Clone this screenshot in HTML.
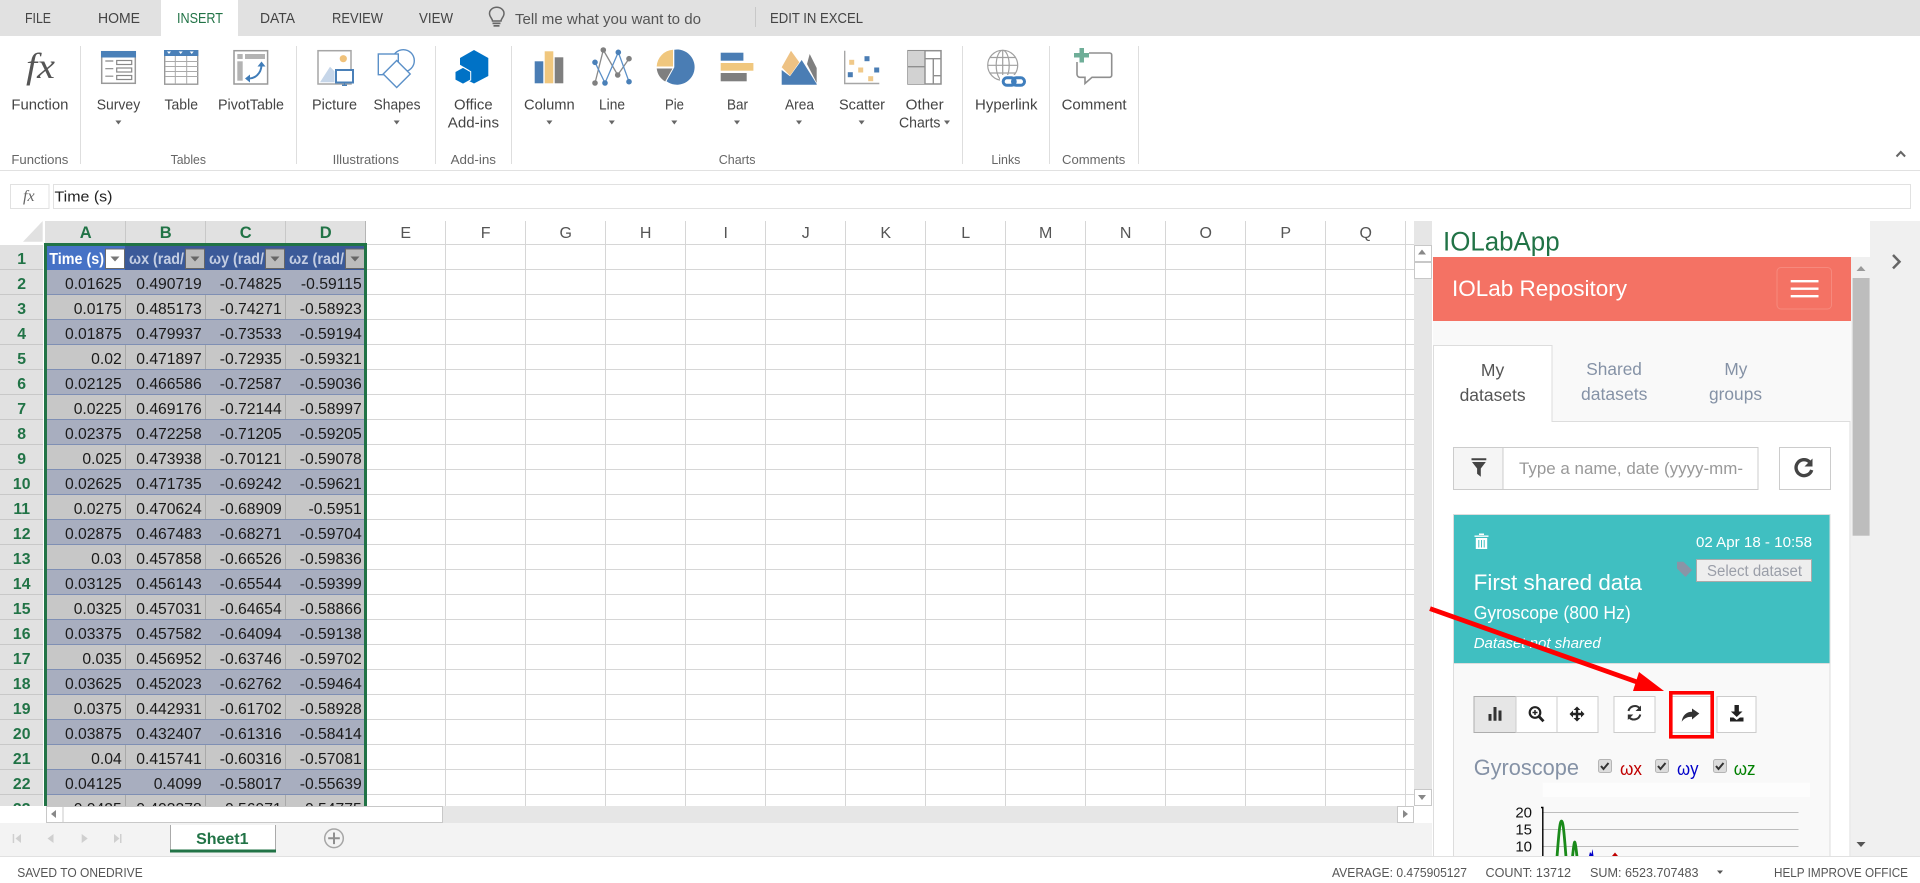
<!DOCTYPE html>
<html lang="en"><head><meta charset="utf-8"><title>Excel Online - IOLabApp</title>
<style>
html,body{margin:0;padding:0;width:1920px;height:883px;overflow:hidden;background:#fff}
svg{display:block;font-family:"Liberation Sans",Arial,sans-serif}
.tab{font-size:15px;fill:#444}
.lb{font-size:14.5px;fill:#444}
.gl{font-size:13px;fill:#666}
.c{font-size:15.7px;fill:#1a1a1a;text-anchor:end}
.rh{font-size:15.8px;font-weight:bold;fill:#217346;text-anchor:middle}
.ch{font-size:16px;fill:#555;text-anchor:middle}
.chs{font-size:16.5px;font-weight:bold;fill:#217346;text-anchor:middle}
.st{font-size:12.5px;fill:#555}
.ar{fill:#666}
</style></head><body>
<svg width="1920" height="883" viewBox="0 0 1920 883" xmlns="http://www.w3.org/2000/svg">
<defs>
<pattern id="gh" x="0" y="245" width="10" height="25" patternUnits="userSpaceOnUse"><rect y="24" width="10" height="1" fill="#d6d6d6"/></pattern>
<pattern id="gv" x="366" y="0" width="80" height="10" patternUnits="userSpaceOnUse"><rect x="79" width="1" height="10" fill="#d6d6d6"/></pattern>
<pattern id="rows" x="47" y="270" width="317" height="50" patternUnits="userSpaceOnUse">
<rect width="317" height="25" fill="#a8aebf"/><rect y="25" width="317" height="25" fill="#c7c7c7"/>
<rect x="78" y="25" width="1" height="25" fill="#a9a9a9"/><rect x="158" y="25" width="1" height="25" fill="#a9a9a9"/><rect x="238" y="25" width="1" height="25" fill="#a9a9a9"/>
<rect y="24" width="317" height="1" fill="#7f8fb4"/><rect y="49" width="317" height="1" fill="#7f8fb4"/>
</pattern>
<pattern id="rhp" x="0" y="245" width="43" height="25" patternUnits="userSpaceOnUse"><rect width="43" height="25" fill="#e1e1e1"/><rect y="24" width="43" height="1" fill="#c8c8c8"/></pattern>
<clipPath id="gridclip"><rect x="0" y="221" width="1414" height="585"/></clipPath>
<clipPath id="paneclip"><rect x="1433" y="257" width="418" height="599"/></clipPath>
</defs>

<!-- Tab bar -->
<rect width="1920" height="36" fill="#e1e1e1"/>
<rect x="161" width="77" height="36" fill="#fff"/>
<text class="tab" x="25" y="23" textLength="26" lengthAdjust="spacingAndGlyphs">FILE</text>
<text class="tab" x="98" y="23" textLength="42" lengthAdjust="spacingAndGlyphs">HOME</text>
<text class="tab" x="177" y="23" textLength="46" lengthAdjust="spacingAndGlyphs" style="fill:#217346">INSERT</text>
<text class="tab" x="260" y="23" textLength="35" lengthAdjust="spacingAndGlyphs">DATA</text>
<text class="tab" x="332" y="23" textLength="51" lengthAdjust="spacingAndGlyphs">REVIEW</text>
<text class="tab" x="419" y="23" textLength="34" lengthAdjust="spacingAndGlyphs">VIEW</text>
<path d="M492.5 21c0-2.500-3-4-3-7.500a7 6 0 0 1 14.500 0c0 3.500-3 5-3 7.500z" fill="none" stroke="#666" stroke-width="1.500"/><rect x="492.500" y="22.500" width="8" height="1.700" fill="#666"/><rect x="493.500" y="25" width="6" height="1.700" fill="#666"/>
<text class="tab" x="515" y="24" textLength="186" lengthAdjust="spacingAndGlyphs" style="fill:#555">Tell me what you want to do</text>
<rect x="755" y="7" width="1" height="20" fill="#c8c8c8"/>
<text class="tab" x="770" y="23" textLength="93" lengthAdjust="spacingAndGlyphs">EDIT IN EXCEL</text>

<!-- Ribbon separators -->
<g fill="#dedede"><rect x="80" y="46" width="1" height="118"/><rect x="296" y="46" width="1" height="118"/><rect x="435" y="46" width="1" height="118"/><rect x="511" y="46" width="1" height="118"/><rect x="962" y="46" width="1" height="118"/><rect x="1049" y="46" width="1" height="118"/><rect x="1138" y="46" width="1" height="118"/></g>
<rect y="170" width="1920" height="1" fill="#e1e1e1"/>
<path d="M1896.500 156.500l4.300-4.500 4.300 4.500" fill="none" stroke="#666" stroke-width="2"/>

<!-- Ribbon labels -->
<g>
<text class="lb" x="11.400" y="109.500" textLength="57" lengthAdjust="spacingAndGlyphs">Function</text>
<text class="lb" x="96.700" y="109.500" textLength="43.500" lengthAdjust="spacingAndGlyphs">Survey</text>
<text class="lb" x="164.500" y="109.500" textLength="33.500" lengthAdjust="spacingAndGlyphs">Table</text>
<text class="lb" x="218" y="109.500" textLength="66" lengthAdjust="spacingAndGlyphs">PivotTable</text>
<text class="lb" x="312" y="109.500" textLength="45" lengthAdjust="spacingAndGlyphs">Picture</text>
<text class="lb" x="373.500" y="109.500" textLength="47" lengthAdjust="spacingAndGlyphs">Shapes</text>
<text class="lb" x="454" y="109.500" textLength="38.600" lengthAdjust="spacingAndGlyphs">Office</text>
<text class="lb" x="447.800" y="127.500" textLength="51.200" lengthAdjust="spacingAndGlyphs">Add-ins</text>
<text class="lb" x="524" y="109.500" textLength="50.700" lengthAdjust="spacingAndGlyphs">Column</text>
<text class="lb" x="599" y="109.500" textLength="26" lengthAdjust="spacingAndGlyphs">Line</text>
<text class="lb" x="665" y="109.500" textLength="19" lengthAdjust="spacingAndGlyphs">Pie</text>
<text class="lb" x="727" y="109.500" textLength="21" lengthAdjust="spacingAndGlyphs">Bar</text>
<text class="lb" x="785" y="109.500" textLength="29" lengthAdjust="spacingAndGlyphs">Area</text>
<text class="lb" x="839" y="109.500" textLength="46" lengthAdjust="spacingAndGlyphs">Scatter</text>
<text class="lb" x="905.700" y="109.500" textLength="38" lengthAdjust="spacingAndGlyphs">Other</text>
<text class="lb" x="899" y="127.500" textLength="41.400" lengthAdjust="spacingAndGlyphs">Charts</text>
<text class="lb" x="975" y="109.500" textLength="62.500" lengthAdjust="spacingAndGlyphs">Hyperlink</text>
<text class="lb" x="1061.600" y="109.500" textLength="65" lengthAdjust="spacingAndGlyphs">Comment</text>
<text class="gl" x="11.400" y="164" textLength="57" lengthAdjust="spacingAndGlyphs">Functions</text>
<text class="gl" x="170.600" y="164" textLength="35.400" lengthAdjust="spacingAndGlyphs">Tables</text>
<text class="gl" x="332.600" y="164" textLength="66.400" lengthAdjust="spacingAndGlyphs">Illustrations</text>
<text class="gl" x="450.600" y="164" textLength="45.400" lengthAdjust="spacingAndGlyphs">Add-ins</text>
<text class="gl" x="718.800" y="164" textLength="36.700" lengthAdjust="spacingAndGlyphs">Charts</text>
<text class="gl" x="991.400" y="164" textLength="29" lengthAdjust="spacingAndGlyphs">Links</text>
<text class="gl" x="1062" y="164" textLength="63.300" lengthAdjust="spacingAndGlyphs">Comments</text>
</g>
<g class="ar">
<path d="M115.400 120.500h6l-3 4z"/><path d="M393.700 120.500h6l-3 4z"/><path d="M546.400 120.500h6l-3 4z"/><path d="M608.800 120.500h6l-3 4z"/><path d="M671.300 120.500h6l-3 4z"/><path d="M734 120.500h6l-3 4z"/><path d="M796 120.500h6l-3 4z"/><path d="M858.600 120.500h6l-3 4z"/><path d="M944 120.500h6l-3 4z"/>
</g>

<!-- fx -->
<text x="26" y="78" font-family="Liberation Serif,serif" font-style="italic" font-size="36" fill="#555" textLength="29" lengthAdjust="spacingAndGlyphs">fx</text>

<!-- Survey -->
<rect x="101.700" y="51.700" width="33.600" height="31.600" fill="#fff" stroke="#999" stroke-width="1.500"/><rect x="101" y="51" width="35" height="6.500" fill="#4a80b8"/>
<g fill="none" stroke="#888" stroke-width="1.200"><path d="M105.300 61h8M105.300 68.700h8M105.300 76.200h8"/><rect x="116.700" y="60.500" width="15" height="4"/><rect x="116.700" y="68" width="15" height="4"/><rect x="116.700" y="75.500" width="15" height="4"/></g>
<!-- Table -->
<rect x="164.700" y="50.700" width="33" height="33.500" fill="#fff" stroke="#999" stroke-width="1.400"/><rect x="164" y="50" width="34.300" height="6" fill="#4a80b8"/>
<path d="M167 51.500h4l-2 2.500zM178.700 51.500h4l-2 2.500zM189.700 51.500h4l-2 2.500z" fill="#fff"/>
<path d="M175.300 56v28M186.700 56v28M165 61.500h33M165 66.500h33M165 71.500h33M165 76.500h33" stroke="#aaa" stroke-width="1" fill="none"/>
<!-- Pivot -->
<rect x="234" y="50.700" width="33.600" height="33.300" fill="#fff" stroke="#999" stroke-width="1.500"/>
<g fill="#b3b3b3"><rect x="237.300" y="54" width="5.400" height="5"/><rect x="245" y="54" width="20" height="5"/><rect x="237.300" y="61.300" width="5.400" height="19.400"/></g>
<path d="M248 78.500c7 .5 13-5 13.500-13" fill="none" stroke="#3f7cb8" stroke-width="2"/><path d="M257.500 66.500l4-5 4 5zM250 74.500l-5 4 5 4z" fill="#3f7cb8"/>
<!-- Picture -->
<rect x="318" y="50.700" width="33" height="33.300" fill="#fff" stroke="#a6a6a6" stroke-width="1.500"/>
<path d="M320 82.300L330 66.700l4.500 4.500 0 11z" fill="#c6d6e9"/>
<circle cx="343.300" cy="58.700" r="3.600" fill="#f0c27b"/>
<rect x="336" y="70" width="17" height="12.500" fill="#fff" stroke="#4a80b8" stroke-width="2"/><rect x="342" y="84.500" width="5" height="1.500" fill="#4a80b8"/><rect x="344" y="83" width="1" height="2" fill="#4a80b8"/>
<!-- Shapes -->
<g fill="none" stroke="#5b90c8" stroke-width="1.400"><circle cx="403.300" cy="60.700" r="11"/><rect x="378.300" y="54" width="20" height="20.700" fill="#fff"/><path d="M396.700 60.500l13.500 13.500-13.500 13.500-13.500-13.500z" fill="#fff"/></g>
<!-- Add-ins -->
<path d="M474 50l14.300 8v18l-14.300 7.500-5-2.500v-11l-9-5.200V58z" fill="#0072c6"/>
<path d="M463 67.300l7.700 4.400V80L463 84.200 455 80v-8.300z" fill="#0072c6" stroke="#fff" stroke-width="1"/>
<!-- Column -->
<rect x="534.700" y="61.300" width="8.600" height="22" fill="#4a7db4"/><rect x="544.700" y="51.300" width="8.600" height="32" fill="#f0c77e"/><rect x="554.700" y="57.300" width="8.600" height="26" fill="#7f7f7f"/>
<!-- Line -->
<path d="M595 83L603.300 50 617.700 75 629 58.700" fill="none" stroke="#8a8a8a" stroke-width="1.300"/><path d="M595 62.300L605 83 618.300 52.300 629 81.700" fill="none" stroke="#5b90c8" stroke-width="1.300"/>
<g fill="#808080"><circle cx="595" cy="83" r="2.800"/><circle cx="603.300" cy="50" r="2.800"/><circle cx="617.700" cy="75" r="2.800"/><circle cx="629" cy="58.700" r="2.800"/></g>
<g fill="#4a80b8"><circle cx="595" cy="62.300" r="2.800"/><circle cx="605" cy="83" r="2.800"/><circle cx="618.300" cy="52.300" r="2.800"/><circle cx="629" cy="81.700" r="2.800"/></g>
<!-- Pie -->
<path d="M674.300 67.300V49.700a17.600 17.600 0 1 1 -7.800 31.500z" fill="#4a7db4"/><path d="M673 66.500V49.700A17.600 17.600 0 0 0 656.700 66.500z" fill="#f0c77e"/><path d="M672.500 68.500H656.700a17.600 17.600 0 0 0 8.500 13z" fill="#7f7f7f"/>
<!-- Bar -->
<rect x="720.700" y="52.700" width="22.700" height="8" fill="#4a7db4"/><rect x="720.700" y="63" width="32.700" height="7.700" fill="#f0c77e"/><rect x="720.700" y="73" width="26" height="8.300" fill="#7f7f7f"/>
<!-- Area -->
<path d="M807 64l2.700-10 7 14v15z" fill="#7f7f7f"/><path d="M781.700 67.300L791 50.700l8.300 11.600-9.300 13.400z" fill="#eec284"/><path d="M781.700 70l8.300 6.300L801.700 60l15 24v.7h-35z" fill="#4a7db4"/>
<!-- Scatter -->
<path d="M844.700 50.700V83.500h34.600" fill="none" stroke="#a6a6a6" stroke-width="1.400"/>
<g fill="#f0c98a"><rect x="849.200" y="59.800" width="5" height="5"/><rect x="858.200" y="67.500" width="5" height="5"/><rect x="868.200" y="76.200" width="5" height="5"/></g>
<g fill="#4a7db4"><rect x="864.500" y="56.200" width="5" height="5"/><rect x="847.800" y="72.200" width="5" height="5"/><rect x="874.200" y="67.500" width="5" height="5"/></g>
<!-- Other -->
<rect x="908" y="50.700" width="33" height="33.300" fill="#fff" stroke="#8f8f8f" stroke-width="1.500"/><rect x="908" y="51" width="17" height="33" fill="#d2d2d2"/>
<path d="M925 50.700V84M908 66.700h17M925 58.700h16M933.300 58.700V84M933.300 75.700H941" fill="none" stroke="#8f8f8f" stroke-width="1.400"/>
<!-- Hyperlink -->
<g fill="none" stroke="#a0a0a0" stroke-width="1.200"><circle cx="1002.700" cy="65.300" r="15"/><ellipse cx="1002.700" cy="65.300" rx="6.500" ry="15"/><path d="M1002.700 50.300v30M987.700 65.300h30M990 57.500h25.500M990 73h25.500"/></g>
<rect x="1000" y="75" width="28" height="13" fill="#fff"/>
<g fill="none" stroke="#3f7ebd" stroke-width="3"><rect x="1003.200" y="77.800" width="12" height="7.500" rx="3.700"/><rect x="1012.500" y="77.800" width="12" height="7.500" rx="3.700"/></g>
<!-- Comment -->
<path d="M1089 53H1109.700a2 2 0 0 1 2 2V75.300a2 2 0 0 1-2 2H1092L1085 83.500V77.300H1080a3 3 0 0 1-3-3V62" fill="none" stroke="#8f8f8f" stroke-width="1.600"/>
<path d="M1079.500 48h4.500v5h5v4.500h-5v5h-4.500v-5h-5.500V53h5.500z" fill="#6fae98"/>

<!-- Formula bar -->
<rect x="10.500" y="184.500" width="38.500" height="24" fill="#fff" stroke="#e1e1e1"/>
<text x="23" y="201" font-family="Liberation Serif,serif" font-style="italic" font-size="16" fill="#666">fx</text>
<rect x="53.500" y="184.500" width="1857" height="24" fill="#fff" stroke="#e1e1e1"/>
<text x="54.500" y="201.500" font-size="15" fill="#222" textLength="58" lengthAdjust="spacingAndGlyphs">Time (s)</text>

<!-- Grid -->
<path d="M42.700 221v20.700H23z" fill="#e1e1e1"/>
<rect x="45" y="221" width="320" height="22" fill="#e1e1e1"/>
<rect x="125" y="221" width="1" height="22" fill="#c8c8c8"/><rect x="205" y="221" width="1" height="22" fill="#c8c8c8"/><rect x="285" y="221" width="1" height="22" fill="#c8c8c8"/><rect x="365" y="221" width="1" height="24" fill="#b5b5b5"/>
<rect x="366" y="244" width="1048" height="1" fill="#d6d6d6"/>
<rect x="366" y="245" width="1048" height="561" fill="url(#gh)"/>
<rect x="366" y="221" width="1040" height="585" fill="url(#gv)"/>
<text class="chs" x="85.700" y="238">A</text><text class="chs" x="165.700" y="238">B</text><text class="chs" x="245.700" y="238">C</text><text class="chs" x="325.700" y="238">D</text>
<g><text class="ch" x="405.700" y="238">E</text><text class="ch" x="485.700" y="238">F</text><text class="ch" x="565.700" y="238">G</text><text class="ch" x="645.700" y="238">H</text><text class="ch" x="725.700" y="238">I</text><text class="ch" x="805.700" y="238">J</text><text class="ch" x="885.700" y="238">K</text><text class="ch" x="965.700" y="238">L</text><text class="ch" x="1045.700" y="238">M</text><text class="ch" x="1125.700" y="238">N</text><text class="ch" x="1205.700" y="238">O</text><text class="ch" x="1285.700" y="238">P</text><text class="ch" x="1365.700" y="238">Q</text></g>

<g clip-path="url(#gridclip)">
<rect x="0" y="245" width="43" height="561" fill="url(#rhp)"/>
<rect x="47" y="270" width="317" height="536" fill="url(#rows)"/>
<rect x="47" y="246" width="317" height="24" fill="#3b5a99"/>
<rect x="47" y="246" width="78" height="24" fill="#4672c6"/>
<text x="49.300" y="264" font-size="15.500" font-weight="bold" fill="#fff" textLength="54.700" lengthAdjust="spacingAndGlyphs">Time (s)</text>
<g font-size="15.500" font-weight="bold" fill="#c3cde2">
<text x="129" y="264" textLength="55" lengthAdjust="spacingAndGlyphs">ωx (rad/</text>
<text x="209" y="264" textLength="55" lengthAdjust="spacingAndGlyphs">ωy (rad/</text>
<text x="289" y="264" textLength="55" lengthAdjust="spacingAndGlyphs">ωz (rad/</text>
</g>
<rect x="105.500" y="249" width="19" height="19.500" fill="#fff" stroke="#6a6a6a"/><path d="M110.500 256.500h9l-4.500 5z" fill="#777"/>
<rect x="185.500" y="249" width="19" height="19.500" fill="#bcbcbc" stroke="#666"/><path d="M190.500 256.500h9l-4.500 5z" fill="#666"/>
<rect x="265.500" y="249" width="19" height="19.500" fill="#bcbcbc" stroke="#666"/><path d="M270.500 256.500h9l-4.500 5z" fill="#666"/>
<rect x="345.500" y="249" width="19" height="19.500" fill="#bcbcbc" stroke="#666"/><path d="M350.500 256.500h9l-4.500 5z" fill="#666"/>

<text class="rh" x="21.700" y="264">1</text><text class="rh" x="21.700" y="289">2</text><text class="rh" x="21.700" y="314">3</text><text class="rh" x="21.700" y="339">4</text><text class="rh" x="21.700" y="364">5</text><text class="rh" x="21.700" y="389">6</text><text class="rh" x="21.700" y="414">7</text><text class="rh" x="21.700" y="439">8</text><text class="rh" x="21.700" y="464">9</text><text class="rh" x="21.700" y="489">10</text><text class="rh" x="21.700" y="514">11</text><text class="rh" x="21.700" y="539">12</text><text class="rh" x="21.700" y="564">13</text><text class="rh" x="21.700" y="589">14</text><text class="rh" x="21.700" y="614">15</text><text class="rh" x="21.700" y="639">16</text><text class="rh" x="21.700" y="664">17</text><text class="rh" x="21.700" y="689">18</text><text class="rh" x="21.700" y="714">19</text><text class="rh" x="21.700" y="739">20</text><text class="rh" x="21.700" y="764">21</text><text class="rh" x="21.700" y="789">22</text><text class="rh" x="21.700" y="814">23</text>

<text class="c" x="121.700" y="289">0.01625</text><text class="c" x="201.700" y="289">0.490719</text><text class="c" x="281.700" y="289">-0.74825</text><text class="c" x="361.700" y="289">-0.59115</text>
<text class="c" x="121.700" y="314">0.0175</text><text class="c" x="201.700" y="314">0.485173</text><text class="c" x="281.700" y="314">-0.74271</text><text class="c" x="361.700" y="314">-0.58923</text>
<text class="c" x="121.700" y="339">0.01875</text><text class="c" x="201.700" y="339">0.479937</text><text class="c" x="281.700" y="339">-0.73533</text><text class="c" x="361.700" y="339">-0.59194</text>
<text class="c" x="121.700" y="364">0.02</text><text class="c" x="201.700" y="364">0.471897</text><text class="c" x="281.700" y="364">-0.72935</text><text class="c" x="361.700" y="364">-0.59321</text>
<text class="c" x="121.700" y="389">0.02125</text><text class="c" x="201.700" y="389">0.466586</text><text class="c" x="281.700" y="389">-0.72587</text><text class="c" x="361.700" y="389">-0.59036</text>
<text class="c" x="121.700" y="414">0.0225</text><text class="c" x="201.700" y="414">0.469176</text><text class="c" x="281.700" y="414">-0.72144</text><text class="c" x="361.700" y="414">-0.58997</text>
<text class="c" x="121.700" y="439">0.02375</text><text class="c" x="201.700" y="439">0.472258</text><text class="c" x="281.700" y="439">-0.71205</text><text class="c" x="361.700" y="439">-0.59205</text>
<text class="c" x="121.700" y="464">0.025</text><text class="c" x="201.700" y="464">0.473938</text><text class="c" x="281.700" y="464">-0.70121</text><text class="c" x="361.700" y="464">-0.59078</text>
<text class="c" x="121.700" y="489">0.02625</text><text class="c" x="201.700" y="489">0.471735</text><text class="c" x="281.700" y="489">-0.69242</text><text class="c" x="361.700" y="489">-0.59621</text>
<text class="c" x="121.700" y="514">0.0275</text><text class="c" x="201.700" y="514">0.470624</text><text class="c" x="281.700" y="514">-0.68909</text><text class="c" x="361.700" y="514">-0.5951</text>
<text class="c" x="121.700" y="539">0.02875</text><text class="c" x="201.700" y="539">0.467483</text><text class="c" x="281.700" y="539">-0.68271</text><text class="c" x="361.700" y="539">-0.59704</text>
<text class="c" x="121.700" y="564">0.03</text><text class="c" x="201.700" y="564">0.457858</text><text class="c" x="281.700" y="564">-0.66526</text><text class="c" x="361.700" y="564">-0.59836</text>
<text class="c" x="121.700" y="589">0.03125</text><text class="c" x="201.700" y="589">0.456143</text><text class="c" x="281.700" y="589">-0.65544</text><text class="c" x="361.700" y="589">-0.59399</text>
<text class="c" x="121.700" y="614">0.0325</text><text class="c" x="201.700" y="614">0.457031</text><text class="c" x="281.700" y="614">-0.64654</text><text class="c" x="361.700" y="614">-0.58866</text>
<text class="c" x="121.700" y="639">0.03375</text><text class="c" x="201.700" y="639">0.457582</text><text class="c" x="281.700" y="639">-0.64094</text><text class="c" x="361.700" y="639">-0.59138</text>
<text class="c" x="121.700" y="664">0.035</text><text class="c" x="201.700" y="664">0.456952</text><text class="c" x="281.700" y="664">-0.63746</text><text class="c" x="361.700" y="664">-0.59702</text>
<text class="c" x="121.700" y="689">0.03625</text><text class="c" x="201.700" y="689">0.452023</text><text class="c" x="281.700" y="689">-0.62762</text><text class="c" x="361.700" y="689">-0.59464</text>
<text class="c" x="121.700" y="714">0.0375</text><text class="c" x="201.700" y="714">0.442931</text><text class="c" x="281.700" y="714">-0.61702</text><text class="c" x="361.700" y="714">-0.58928</text>
<text class="c" x="121.700" y="739">0.03875</text><text class="c" x="201.700" y="739">0.432407</text><text class="c" x="281.700" y="739">-0.61316</text><text class="c" x="361.700" y="739">-0.58414</text>
<text class="c" x="121.700" y="764">0.04</text><text class="c" x="201.700" y="764">0.415741</text><text class="c" x="281.700" y="764">-0.60316</text><text class="c" x="361.700" y="764">-0.57081</text>
<text class="c" x="121.700" y="789">0.04125</text><text class="c" x="201.700" y="789">0.4099</text><text class="c" x="281.700" y="789">-0.58017</text><text class="c" x="361.700" y="789">-0.55639</text>
<text class="c" x="121.700" y="814">0.0425</text><text class="c" x="201.700" y="814">0.403378</text><text class="c" x="281.700" y="814">-0.56971</text><text class="c" x="361.700" y="814">-0.54775</text>

<!-- selection -->
<rect x="44" y="243" width="322.700" height="3" fill="#217346"/><rect x="44" y="243" width="3" height="563" fill="#217346"/><rect x="364" y="243" width="3" height="563" fill="#217346"/>
</g>

<!-- V scrollbar -->
<rect x="1414" y="221" width="18" height="585" fill="#e6e6e6"/>
<rect x="1414.500" y="245.500" width="17" height="16" fill="#fff" stroke="#c8c8c8"/><path d="M1418 254.500h8l-4-5z" fill="#888"/>
<rect x="1414.500" y="262.500" width="17" height="16" fill="#fff" stroke="#c8c8c8"/>
<rect x="1414.500" y="789.500" width="17" height="16" fill="#fff" stroke="#c8c8c8"/><path d="M1418 795h8l-4 5z" fill="#888"/>
<!-- H scrollbar -->
<rect x="0" y="806" width="1432" height="17" fill="#fff"/>
<rect x="46.500" y="806.500" width="396" height="16" fill="#fff" stroke="#c8c8c8"/>
<rect x="46.500" y="806.500" width="16.500" height="16" fill="#fff" stroke="#c8c8c8"/><path d="M56 810v8l-5-4z" fill="#888"/>
<rect x="443" y="806" width="954" height="17" fill="#e6e6e6"/>
<rect x="1397.500" y="806.500" width="16" height="16" fill="#fff" stroke="#c8c8c8"/><path d="M1403 810v8l5-4z" fill="#888"/>

<!-- Sheet tabs -->
<rect x="0" y="823" width="1432" height="33" fill="#f3f3f3"/>
<rect x="170" y="825" width="105.500" height="25" fill="#fff"/><rect x="170" y="825" width="1" height="27" fill="#aaa"/><rect x="275" y="825" width="1" height="27" fill="#aaa"/>
<rect x="170" y="849.500" width="106" height="3" fill="#217346"/>
<text x="222.300" y="844" font-size="16" font-weight="bold" fill="#217346" text-anchor="middle">Sheet1</text>
<g fill="#cfcfcf"><rect x="12.700" y="834" width="1.500" height="9"/><path d="M21 834v9l-5.500-4.500z"/><path d="M53.500 834v9l-6-4.500z"/><path d="M81.700 834v9l6-4.500z"/><path d="M114 834v9l5.500-4.500z"/><rect x="120" y="834" width="1.500" height="9"/></g>
<circle cx="334" cy="838.300" r="9.300" fill="none" stroke="#a6a6a6" stroke-width="1.500"/><path d="M334 832.500v11.600M328.200 838.300h11.600" stroke="#8f8f8f" stroke-width="2" fill="none"/>

<!-- Task pane -->
<rect x="1432" y="221" width="439" height="635" fill="#fff"/>
<rect x="1870" y="221" width="50" height="635" fill="#f0f0f0"/>
<path d="M1893 255l6.500 6.700-6.500 6.700" fill="none" stroke="#666" stroke-width="2.500"/>
<text x="1443" y="250.500" font-size="27" fill="#217346" textLength="116.600" lengthAdjust="spacingAndGlyphs">IOLabApp</text>

<!-- pane scroll -->
<rect x="1851" y="257" width="19" height="599" fill="#f0f0f0"/>
<path d="M1856.500 271h9l-4.500-5z" fill="#999"/>
<rect x="1852.600" y="278" width="17" height="257.700" fill="#bdbdbd"/>
<path d="M1856.500 842h9l-4.500 5z" fill="#555"/>

<g clip-path="url(#paneclip)">
<rect x="1433" y="257" width="418" height="599" fill="#f9f9f9"/>
<rect x="1433" y="257" width="418" height="64" fill="#f47264"/>
<text x="1452" y="296" font-size="22.400" fill="#fff" textLength="175" lengthAdjust="spacingAndGlyphs">IOLab Repository</text>
<rect x="1777" y="267.500" width="54.500" height="41.500" rx="4" fill="none" stroke="#f6897d"/>
<g fill="#fff"><rect x="1790.700" y="280" width="27.800" height="2.400"/><rect x="1790.700" y="287.500" width="27.800" height="2.400"/><rect x="1790.700" y="295" width="27.800" height="2.400"/></g>

<!-- tabs -->
<rect x="1433.500" y="421.500" width="416.500" height="440" fill="#fff" stroke="#ddd"/>
<path d="M1433.500 422V345.500H1552V422" fill="#fff" stroke="#ddd"/>
<rect x="1434" y="420" width="117.500" height="3" fill="#fff"/>
<text x="1492.600" y="376" font-size="17.500" fill="#555" text-anchor="middle">My</text>
<text x="1459.600" y="401" font-size="17.500" fill="#555" textLength="66" lengthAdjust="spacingAndGlyphs">datasets</text>
<text x="1586.300" y="375" font-size="17.500" fill="#8592a6" textLength="55.600" lengthAdjust="spacingAndGlyphs">Shared</text>
<text x="1581" y="400" font-size="17.500" fill="#8592a6" textLength="66.400" lengthAdjust="spacingAndGlyphs">datasets</text>
<text x="1724.400" y="375" font-size="17.500" fill="#8592a6" textLength="23" lengthAdjust="spacingAndGlyphs">My</text>
<text x="1709" y="400" font-size="17.500" fill="#8592a6" textLength="53" lengthAdjust="spacingAndGlyphs">groups</text>

<!-- filter -->
<rect x="1453.500" y="447.500" width="304.500" height="42" fill="#fff" stroke="#ccc"/>
<rect x="1453.500" y="447.500" width="49.500" height="42" fill="#f5f5f5" stroke="#ccc"/>
<path d="M1471.500 458.300h14.800v2h-14.800zM1472 462h13.800l-5 6.500v8.200l-3.700-3v-5.200z" fill="#444"/>
<text x="1519" y="474" font-size="17" fill="#999" textLength="224" lengthAdjust="spacingAndGlyphs">Type a name, date (yyyy-mm-</text>
<rect x="1779.500" y="447.500" width="51" height="42" fill="#fff" stroke="#ccc"/>
<path d="M1809.500 461.800a8 8 0 1 0 2.200 8.200" fill="none" stroke="#444" stroke-width="3.400"/><path d="M1812.500 458.500v8h-8z" fill="#444"/>

<!-- card -->
<rect x="1453.500" y="514.500" width="376.500" height="360" fill="#f9f9f9" stroke="#ddd"/>
<rect x="1454" y="515" width="375.500" height="148" fill="#40bfc1"/>
<rect x="1454" y="663" width="375.500" height="1" fill="#ddd"/>
<path d="M1474.500 535.500h14v1.400h-14zM1479 533.500h5v1.500h-5zM1475.800 538h11.400v11h-11.400z" fill="#fff"/>
<path d="M1478.800 540v7.500M1481.500 540v7.500M1484.200 540v7.500" stroke="#40bfc1" stroke-width="1" fill="none"/>
<text x="1696" y="547" font-size="15" fill="#fff" textLength="116" lengthAdjust="spacingAndGlyphs">02 Apr 18 - 10:58</text>
<path d="M1677 561.700h6.500l8.500 8.300-6.500 7-8.500-8.500z" fill="#8a94a6"/>
<rect x="1696.500" y="559.500" width="115" height="22" fill="#eee" stroke="#aaa"/>
<text x="1707" y="576" font-size="15.400" fill="#9a9ea8" textLength="95" lengthAdjust="spacingAndGlyphs">Select dataset</text>
<text x="1473.700" y="590" font-size="22" fill="#fff" textLength="168.300" lengthAdjust="spacingAndGlyphs">First shared data</text>
<text x="1473.700" y="619" font-size="18" fill="#fff" textLength="157" lengthAdjust="spacingAndGlyphs">Gyroscope (800 Hz)</text>
<text x="1473.700" y="648" font-size="15" font-style="italic" fill="#fff" textLength="127" lengthAdjust="spacingAndGlyphs">Dataset not shared</text>

<!-- chart tool buttons -->
<rect x="1474" y="696.500" width="42" height="36" fill="#e6e6e6" stroke="#adadad"/>
<rect x="1516" y="696.500" width="41" height="36" fill="#fff" stroke="#ccc"/>
<rect x="1557" y="696.500" width="41" height="36" fill="#fff" stroke="#ccc"/>
<rect x="1614" y="696.500" width="41" height="36" fill="#fff" stroke="#ccc"/>
<rect x="1672" y="696.500" width="39" height="36" fill="#fff" stroke="#ccc"/>
<rect x="1717" y="696.500" width="39" height="36" fill="#fff" stroke="#ccc"/>
<path d="M1488.500 714h3v6.700h-3zM1493.500 707h3v13.700h-3zM1498.500 710.500h3v10.200h-3z" fill="#333"/>
<circle cx="1535" cy="712.500" r="5.300" fill="none" stroke="#222" stroke-width="2.200"/><path d="M1539 716.500l4.500 4.800" stroke="#222" stroke-width="2.800" fill="none"/><path d="M1532.500 712.500h5M1535 710v5" stroke="#222" stroke-width="1.500" fill="none"/>
<path d="M1577 706.500l3.500 3.500h-2.300v2.800h2.800v-2.300l3.500 3.500-3.500 3.500v-2.300h-2.800v2.800h2.300l-3.500 3.500-3.500-3.500h2.300v-2.800h-2.800v2.300l-3.500-3.500 3.500-3.500v2.300h2.800V710h-2.300z" fill="#222"/>
<path d="M1628.500 711a6.500 6.500 0 0 1 11-3M1640.300 714.500a6.500 6.500 0 0 1-11 3" fill="none" stroke="#333" stroke-width="2"/><path d="M1641 705.500v5.500h-5.500zM1627.800 720v-5.500h5.500z" fill="#333"/>
<path d="M1699.300 713.500l-7.300-5v3.200c-5.500 0-9.500 3.500-10.300 10 2.500-3.500 5.500-5 10.300-5v2.800z" fill="#333"/>
<path d="M1734.500 705h4.400v6.500h3.600l-5.800 5.500-5.800-5.500h3.600zM1730 717.500h3.500l3.200 2.500 3.200-2.500h3.600v4h-13.500z" fill="#222"/>

<!-- Gyroscope legend -->
<text x="1473.700" y="775" font-size="22.500" fill="#8592a6" textLength="105.300" lengthAdjust="spacingAndGlyphs">Gyroscope</text>
<g fill="#dcdcdc" stroke="#b5b5b5"><rect x="1598.500" y="759.500" width="13" height="13" rx="2"/><rect x="1655.500" y="759.500" width="13" height="13" rx="2"/><rect x="1713.500" y="759.500" width="13" height="13" rx="2"/></g>
<path d="M1601 766l2.500 3 5-6M1658 766l2.500 3 5-6M1716 766l2.500 3 5-6" fill="none" stroke="#333" stroke-width="2"/>
<text x="1620" y="775" font-size="18" fill="#c00000" textLength="22" lengthAdjust="spacingAndGlyphs">ωx</text>
<text x="1677" y="775" font-size="18" fill="#0000c8" textLength="21.500" lengthAdjust="spacingAndGlyphs">ωy</text>
<text x="1733.700" y="775" font-size="18" fill="#008000" textLength="21.800" lengthAdjust="spacingAndGlyphs">ωz</text>

<!-- chart -->
<rect x="1542.600" y="782.700" width="267.400" height="14.300" fill="#fdfdfd"/>
<g fill="#bdbdbd"><rect x="1542" y="812" width="256.500" height="1"/><rect x="1542" y="829" width="256.500" height="1"/><rect x="1542" y="846" width="256.500" height="1"/></g>
<path d="M1541 807.500h1.800V857" fill="none" stroke="#000" stroke-width="1.400"/>
<g font-size="15" fill="#111" text-anchor="end"><text x="1532" y="817.500">20</text><text x="1532" y="834.500">15</text><text x="1532" y="851.500">10</text></g>
<path d="M1557 857c2-26 3-36 4.500-36s2.500 10 4.500 36M1572.500 857c1-10 1.800-15 2.200-15s1.300 5 2.300 15" fill="none" stroke="#1a8a1a" stroke-width="2.800"/>
<path d="M1589 856l1-4 1.500 2 1-5 1 7z" fill="#0000c8"/><path d="M1612 856l3-3.500 3 3.500z" fill="#c00000"/>
</g>

<!-- red annotation -->
<path d="M1430 608.600L1637 682" stroke="#f00" stroke-width="4.800" fill="none"/>
<path d="M1639 672l25 19h-31z" fill="#f00"/>
<rect x="1670.800" y="692.800" width="41.400" height="44" fill="none" stroke="#f00" stroke-width="3.600"/>

<!-- Status bar -->
<rect y="856" width="1920" height="27" fill="#fff"/>
<rect y="856" width="1920" height="1" fill="#e1e1e1"/>
<text class="st" x="17.300" y="877" textLength="125.400" lengthAdjust="spacingAndGlyphs">SAVED TO ONEDRIVE</text>
<text class="st" x="1332" y="877" textLength="135" lengthAdjust="spacingAndGlyphs">AVERAGE: 0.475905127</text>
<text class="st" x="1485.500" y="877" textLength="85.500" lengthAdjust="spacingAndGlyphs">COUNT: 13712</text>
<text class="st" x="1590" y="877" textLength="108.500" lengthAdjust="spacingAndGlyphs">SUM: 6523.707483</text>
<path d="M1717 870.500h6l-3 3.500z" fill="#555"/>
<text class="st" x="1774" y="877" textLength="134" lengthAdjust="spacingAndGlyphs">HELP IMPROVE OFFICE</text>
</svg>
</body></html>
